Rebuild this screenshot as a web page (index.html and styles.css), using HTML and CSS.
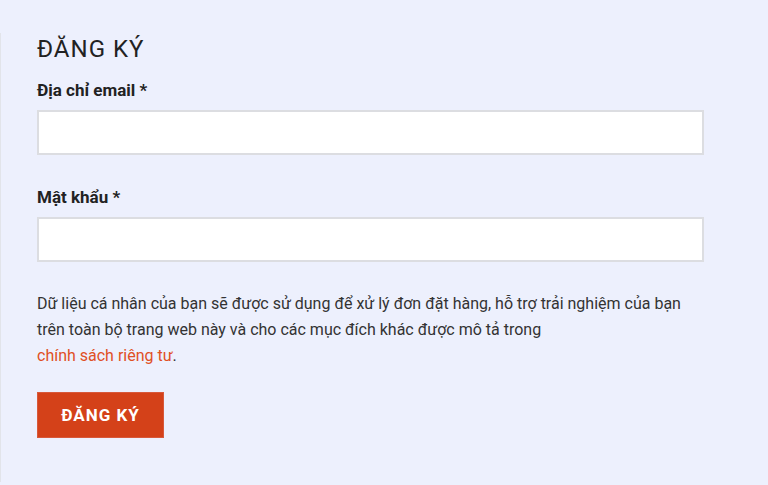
FILE: index.html
```html
<!DOCTYPE html>
<html lang="vi">
<head>
<meta charset="utf-8">
<link rel="stylesheet" href="styles.css">
</head>
<body>
<div class="page">
  <div class="col">
    <h2 class="title">ĐĂNG KÝ</h2>
    <form class="form">
      <div class="field">
        <label class="label">Địa chỉ email <span>*</span></label>
        <input class="input" type="email">
      </div>
      <div class="field">
        <label class="label">Mật khẩu <span>*</span></label>
        <input class="input" type="password">
      </div>
      <p class="privacy">Dữ liệu cá nhân của bạn sẽ được sử dụng để xử lý đơn đặt hàng, hỗ trợ trải nghiệm của bạn trên toàn bộ trang web này và cho các mục đích khác được mô tả trong<br><a class="link" href="#">chính sách riêng tư</a>.</p>
      <button class="btn" type="button">ĐĂNG KÝ</button>
    </form>
  </div>
</div>
</body>
</html>
```
FILE: styles.css
```css
html, body {
  margin: 0;
  padding: 0;
  background: #edf0fd;
  font-family: Roboto, "Liberation Sans", sans-serif;
  color: #222;
}
.page {
  padding-top: 33px;
  height: 452px;
}
.col {
  border-left: 1px solid #e2e4ea;
  height: 449px;
  padding-left: 36px;
  width: 667px;
}
.title {
  margin: 0;
  font-size: 24px;
  font-weight: 400;
  letter-spacing: 1px;
  line-height: 32px;
  color: #222;
}
.form {
  display: flex;
  flex-direction: column;
  margin-top: 15px;
}
.field {
  display: flex;
  flex-direction: column;
}
.field + .field {
  margin-top: 32px;
}
.label {
  font-size: 17px;
  font-weight: 700;
  line-height: 20px;
  margin-bottom: 10px;
  color: #222;
}
.input {
  box-sizing: border-box;
  width: 667px;
  height: 45px;
  border: 2px solid #dcdde1;
  background: #fff;
  margin: 0;
}
.privacy {
  margin: 29px 0 0;
  font-size: 16px;
  line-height: 26px;
  color: #333;
}
.link {
  color: #e04f24;
  text-decoration: none;
}
.btn {
  align-self: flex-start;
  margin-top: 23px;
  width: 127px;
  height: 46px;
  background: #d44119;
  border: 1px solid #d8583a;
  color: #fff;
  font-family: Roboto, "Liberation Sans", sans-serif;
  font-size: 17px;
  font-weight: 700;
  letter-spacing: 1px;
  padding: 0;
}
```
